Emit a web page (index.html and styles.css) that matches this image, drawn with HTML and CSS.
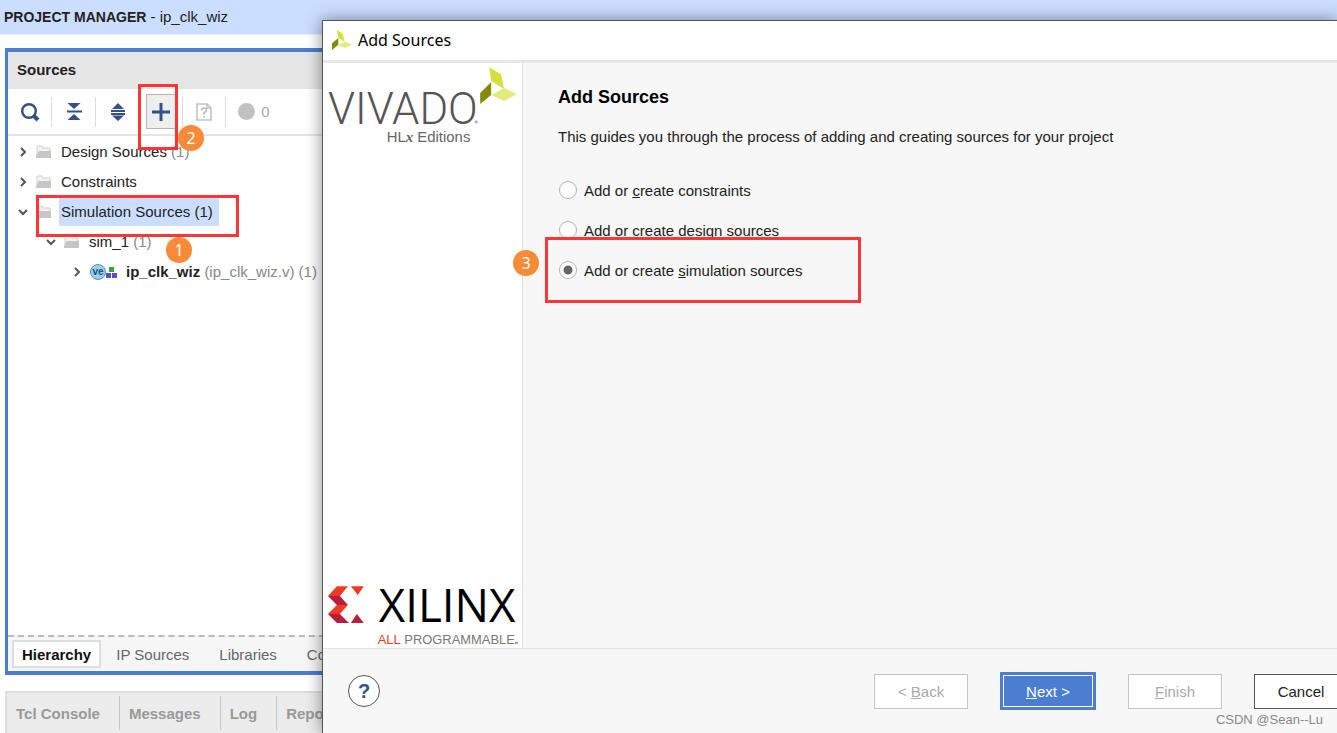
FILE: index.html
```html
<!DOCTYPE html>
<html lang="en">

<head>
    <meta charset="utf-8">
    <title>Add Sources</title>
    <meta name="viewport" content="width=device-width, initial-scale=1">
    <link rel="stylesheet" href="styles.css">
</head>

<body>
    <main class="app">
        <header class="topbar"><b>PROJECT MANAGER</b> - ip_clk_wiz</header>

        <section class="sources">
            <h2 class="sources-title">Sources</h2>
            <div class="toolbar">
                <button class="tool" aria-label="Search">
                    <svg width="20" height="20" viewBox="0 0 20 20"><circle cx="9" cy="9" r="6.800" fill="none" stroke="#33508a" stroke-width="2.400"/><path d="M14 14L18 18" stroke="#33508a" stroke-width="4"/></svg>
                </button>
                <button class="tool" aria-label="Collapse all">
                    <svg width="20" height="20" viewBox="0 0 20 20" fill="#33508a"><path d="M3.500 1H16.500L10 7ZM3.500 18H16.500L10 12ZM3 8.500H18V10.500H3Z"/></svg>
                </button>
                <button class="tool" aria-label="Expand all">
                    <svg width="20" height="20" viewBox="0 0 20 20" fill="#33508a"><path d="M10 1L16 7H4ZM3 8H17V10H3ZM3 11H17V13H3ZM4 13.500H16L10 19Z"/></svg>
                </button>
                <button class="tool tool-add" aria-label="Add sources">
                    <svg width="20" height="20" viewBox="0 0 20 20" fill="#33508a"><path d="M8.500 1H11.500V8.500H19V11.500H11.500V19H8.500V11.500H1V8.500H8.500Z"/></svg>
                    <span class="mark mark-add"></span>
                    <span class="badge badge-add">2</span>
                </button>
                <button class="tool" aria-label="Report">
                    <svg width="20" height="20" viewBox="0 0 20 20"><path d="M3 2H13L17 6V18H3ZM13 2V6H17" fill="none" stroke="#c4c4c4" stroke-width="1.600"/><path d="M7.500 8.500Q7.500 6 10 6Q12.500 6 12.500 8Q12.500 9.500 10 11V12.500M10 14V15.500" fill="none" stroke="#b8b8b8" stroke-width="1.600"/></svg>
                </button>
                <button class="tool tool-count"><span class="dot"></span>0</button>
            </div>

            <ul class="tree">
                <li class="node">
                    <svg class="arrow" viewBox="0 0 10 10"><path d="M3 1L7 5L3 9"/></svg>
                    <svg class="folder" viewBox="0 0 16 14"><path d="M1 10V1H6L7 3H14V6" fill="#f2f2f2" stroke="#cfcfcf"/><path d="M3 6H15V13H0V11Z" fill="#c6c6c6"/></svg>
                    <span class="label">Design Sources <i>(1)</i></span>
                </li>
                <li class="node">
                    <svg class="arrow" viewBox="0 0 10 10"><path d="M3 1L7 5L3 9"/></svg>
                    <svg class="folder" viewBox="0 0 16 14"><path d="M1 10V1H6L7 3H14V6" fill="#f2f2f2" stroke="#cfcfcf"/><path d="M3 6H15V13H0V11Z" fill="#c6c6c6"/></svg>
                    <span class="label">Constraints</span>
                </li>
                <li class="node">
                    <svg class="arrow" viewBox="0 0 10 10"><path d="M1 3L5 7L9 3"/></svg>
                    <svg class="folder" viewBox="0 0 16 14"><path d="M1 10V1H6L7 3H14V6" fill="#f2f2f2" stroke="#cfcfcf"/><path d="M3 6H15V13H0V11Z" fill="#c6c6c6"/></svg>
                    <span class="label selected">Simulation Sources (1)</span>
                    <span class="mark mark-sim"></span>
                    <span class="badge badge-sim">1</span>
                </li>
                <li class="node level-2">
                    <svg class="arrow" viewBox="0 0 10 10"><path d="M1 3L5 7L9 3"/></svg>
                    <svg class="folder" viewBox="0 0 16 14"><path d="M1 10V1H6L7 3H14V6" fill="#f2f2f2" stroke="#cfcfcf"/><path d="M3 6H15V13H0V11Z" fill="#c6c6c6"/></svg>
                    <span class="label">sim_1 <i>(1)</i></span>
                </li>
                <li class="node level-3">
                    <svg class="arrow" viewBox="0 0 10 10"><path d="M3 1L7 5L3 9"/></svg>
                    <svg class="module" viewBox="0 0 28 16"><circle cx="8" cy="8" r="7.500" fill="#9fd0ea" stroke="#4d93bd"/><text x="8" y="11" class="module-text">ve</text><path d="M19 3H24V8H19Z" fill="#35a535"/><path d="M16 9H21V14H16ZM22 9H27V14H22Z" fill="#5a4fc0"/></svg>
                    <span class="label"><b>ip_clk_wiz</b> <i>(ip_clk_wiz.v) (1)</i></span>
                </li>
            </ul>

            <nav class="view-tabs">
                <button class="view-tab active">Hierarchy</button>
                <button class="view-tab">IP Sources</button>
                <button class="view-tab">Libraries</button>
                <button class="view-tab">Compile Order</button>
            </nav>
        </section>

        <nav class="console-tabs">
            <button class="console-tab">Tcl Console</button>
            <button class="console-tab">Messages</button>
            <button class="console-tab">Log</button>
            <button class="console-tab">Reports</button>
        </nav>
    </main>

    <div class="dialog" role="dialog" aria-labelledby="dialog-title">
        <div class="titlebar">
            <svg width="20" height="20" viewBox="0 0 38 38"><path d="M9 0L20 6L24 22L12 15Z" fill="#d5e03a"/><path d="M0 25L12 15V28L0 38Z" fill="#858a0b"/><path d="M12 28L25 22L38 28L25 34Z" fill="#e3ea7e"/></svg>
            <span id="dialog-title">Add Sources</span>
        </div>
        <div class="dialog-body">
            <aside class="brand">
                <svg class="vivado" viewBox="0 0 200 84" role="img" aria-label="Vivado HLx Editions">
                    <text x="5" y="61" class="vivado-name">VIVADO</text>
                    <text x="64" y="79" class="vivado-sub">HL<tspan class="vivado-x">x</tspan> Editions</text>
                    <path d="M167 4L179 11L182 26L169 18Z" fill="#d5e03a"/>
                    <path d="M158 30L169 19V32L158 41Z" fill="#858a0b"/>
                    <path d="M169 32L182 25L195 31L182 38Z" fill="#e3ea7e"/>
                    <circle cx="154" cy="59" r="1.500" fill="#aaa"/>
                </svg>
                <svg class="xilinx" viewBox="0 0 200 68" role="img" aria-label="Xilinx All Programmable">
                    <path d="M14 6H25L17 16H5Z" fill="#ee3a24"/><path d="M28 6H41L35 15Z" fill="#ee3a24"/>
                    <path d="M5 16H17L25 25H14Z" fill="#b51f3c"/><path d="M14 25H25L17 34H5Z" fill="#ee3a24"/>
                    <path d="M5 34H17L26 43H14Z" fill="#b51f3c"/><path d="M34 34L41 43H28Z" fill="#b51f3c"/>
                    <text x="56" y="42" class="xilinx-name">XILINX</text>
                    <text x="55" y="64" class="xilinx-sub"><tspan fill="#ee3a24">ALL</tspan> PROGRAMMABLE</text>
                    <path d="M193 63H196" stroke="#999" stroke-width="2"/>
                </svg>
            </aside>
            <form class="content">
                <h1>Add Sources</h1>
                <p>This guides you through the process of adding and creating sources for your project</p>
                <div class="choice">
                    <input type="radio" name="kind" id="constraints">
                    <label for="constraints">Add or <u>c</u>reate constraints</label>
                </div>
                <div class="choice">
                    <input type="radio" name="kind" id="design">
                    <label for="design"><u>A</u>dd or create design sources</label>
                </div>
                <div class="choice">
                    <input type="radio" name="kind" id="simulation" checked>
                    <label for="simulation">Add or create <u>s</u>imulation sources</label>
                    <span class="mark mark-choice"></span>
                    <span class="badge badge-choice">3</span>
                </div>
            </form>
        </div>
        <footer class="actions">
            <button class="help" aria-label="Help">?</button>
            <button class="btn" disabled>&lt; <u>B</u>ack</button>
            <button class="btn btn-next"><u>N</u>ext &gt;</button>
            <button class="btn" disabled><u>F</u>inish</button>
            <button class="btn btn-cancel">Cancel</button>
        </footer>
        <span class="watermark">CSDN @Sean--Lu</span>
    </div>
</body>

</html>
```
FILE: styles.css
```css
* {
    box-sizing: border-box;
}

body {
    margin: 0;
    height: 100vh;
    overflow: hidden;
    position: relative;
    background: #fff;
    color: #222;
    font-family: "Liberation Sans", Arial, sans-serif;
    font-size: 15px;
}

button {
    font: inherit;
    color: inherit;
    margin: 0;
    padding: 0;
    border: 0;
    background: none;
}

i {
    font-style: normal;
    color: #888;
}

.app {
    display: flex;
    flex-direction: column;
    height: 100%;
}

.topbar {
    height: 35px;
    padding-left: 4px;
    line-height: 33px;
    background: #ccdeff;
    border-bottom: 1px solid #e3edff;
}

.topbar b {
    font-size: 14px;
}

/* sources panel */
.sources {
    display: flex;
    flex-direction: column;
    flex: 1;
    margin: 13px 5px 0;
    border: 4px solid #4b7dd1;
    border-left-width: 3px;
}

.sources-title {
    margin: 0;
    padding-left: 9px;
    font-size: 15px;
    line-height: 35px;
    height: 37px;
    background: #e6e6e6;
}

.toolbar {
    display: flex;
    align-items: center;
    height: 47px;
    border-bottom: 2px solid #e4e4e4;
}

.tool {
    display: flex;
    align-items: center;
    justify-content: center;
    position: relative;
    width: 44px;
    height: 30px;
    border-right: 1px solid #ddd;
}

.tool-add {
    width: 30px;
    height: 35px;
    margin: 0 6px;
    border: 1px solid #b5b5b5;
    background: #eee;
}

.tool-add + .tool {
    border-left: 1px solid #ddd;
}

.tool-count {
    gap: 6px;
    width: 56px;
    border: 0;
    color: #aaa;
}

.dot {
    width: 17px;
    height: 17px;
    border-radius: 50%;
    background: #c1c1c1;
}

.tree {
    flex: 1;
    margin: 0;
    padding: 1px 0 0 10px;
    list-style: none;
}

.node {
    display: flex;
    align-items: center;
    position: relative;
    height: 30px;
    white-space: nowrap;
}

.level-2 {
    padding-left: 28px;
}

.level-3 {
    padding-left: 54px;
}

.arrow {
    width: 10px;
    height: 10px;
    margin-right: 8px;
    fill: none;
    stroke: #555;
    stroke-width: 2;
}

.folder {
    width: 16px;
    height: 14px;
    margin-right: 7px;
}

.module {
    width: 28px;
    height: 16px;
    margin-right: 6px;
}

.module-text {
    font-size: 10px;
    font-weight: bold;
    text-anchor: middle;
    fill: #1e4f78;
}

.label {
    padding: 0 2px;
    line-height: 28px;
}

.selected {
    padding-right: 6px;
    background: #ccdeff;
}

.view-tabs {
    display: flex;
    align-items: center;
    height: 36px;
    padding-left: 4px;
    overflow: hidden;
    background: #f6f6f6;
    border-top: 2px dashed #bbb;
    color: #666;
}

.view-tab {
    height: 28px;
    margin-right: 12px;
    padding: 0 9px;
    white-space: nowrap;
}

.active {
    margin-right: 6px;
    padding: 0 8px;
    border: 2px solid #ddd;
    background: #fff;
    color: #111;
    font-weight: bold;
}

.console-tabs {
    display: flex;
    height: 42px;
    margin: 16px 5px 0;
    padding: 3px 0;
    border: 2px solid #ddd;
    border-bottom: 0;
    background: #ececec;
    color: #999;
    font-weight: bold;
}

.console-tab {
    padding: 0 19px 0 9px;
    border-right: 1px solid #c4c4c4;
}

/* wizard window */
.dialog {
    display: flex;
    flex-direction: column;
    position: absolute;
    top: 20px;
    left: 322px;
    right: 0;
    bottom: 0;
    border: 1px solid #555;
    border-width: 1px 0 0 1px;
    background: #f7f7f7;
    box-shadow: 0 0 16px rgba(0, 0, 0, .45);
}

.titlebar {
    display: flex;
    align-items: center;
    gap: 6px;
    height: 42px;
    padding: 0 9px 2px;
    border-bottom: 3px solid #e8e8e8;
    background: #fff;
    color: #000;
    font-family: "Noto Sans", sans-serif;
    font-size: 16px;
}

.dialog-body {
    display: flex;
    flex: 1;
    border-bottom: 1px solid #e2e2e2;
}

.brand {
    display: flex;
    flex-direction: column;
    justify-content: space-between;
    width: 200px;
    border-right: 1px solid #e2e2e2;
    background: #fff;
}

.vivado {
    height: 84px;
}

.xilinx {
    height: 68px;
}

.vivado-name {
    font-family: Roboto, sans-serif;
    font-size: 44px;
    font-weight: 300;
    fill: #555;
}

.vivado-sub {
    font-size: 15px;
    fill: #666;
}

.vivado-x {
    font-family: "Liberation Serif", serif;
    font-style: italic;
    font-weight: bold;
}

.xilinx-name {
    font-family: "Open Sans", sans-serif;
    font-size: 46px;
    font-weight: 500;
    fill: #000;
}

.xilinx-sub {
    font-size: 13px;
    fill: #777;
}

.content {
    flex: 1;
    padding: 24px 35px;
}

.content h1 {
    margin: 0 0 20px;
    color: #000;
    font-size: 18px;
    line-height: 20px;
}

.content p {
    margin: 0 0 33px;
    line-height: 20px;
}

.choice {
    display: flex;
    align-items: center;
    position: relative;
    height: 20px;
    margin-bottom: 20px;
}

.choice input {
    appearance: none;
    width: 18px;
    height: 18px;
    margin: 0 7px 0 1px;
    border: 1px solid #b4b4b4;
    border-radius: 50%;
    background: #fff;
}

.choice input:checked {
    background: radial-gradient(circle, #666 4px, #fff 5px);
}

.actions {
    display: flex;
    align-items: center;
    height: 84px;
    padding-left: 25px;
    overflow: hidden;
}

.help {
    width: 32px;
    height: 32px;
    margin-right: auto;
    border: 1px solid #555;
    border-radius: 50%;
    background: #fff;
    color: #33508a;
    font-size: 20px;
    font-weight: bold;
}

.btn {
    flex-shrink: 0;
    width: 94px;
    height: 35px;
    margin-left: 32px;
    border: 1px solid #c4c4c4;
    background: #fff;
}

.btn:disabled {
    color: #aaa;
}

.btn-next {
    width: 96px;
    height: 38px;
    border: 2px solid #4b7dd1;
    outline: 1px solid #fff;
    outline-offset: -4px;
    background: #4b7dd1;
    color: #fff;
}

.btn-cancel {
    margin-right: -11px;
    border-color: #555;
}

.watermark {
    position: absolute;
    right: 14px;
    bottom: 6px;
    color: #888;
    font-size: 13px;
}

/* step highlights */
.mark {
    position: absolute;
    z-index: 1;
    border: 3px solid #fc3636;
}

.mark-add {
    top: -11px;
    left: -9px;
    width: 40px;
    height: 66px;
}

.mark-sim {
    top: -2px;
    left: 18px;
    width: 203px;
    height: 42px;
}

.mark-choice {
    top: -23px;
    left: -13px;
    width: 316px;
    height: 66px;
}

.badge {
    position: absolute;
    z-index: 1;
    width: 26px;
    height: 26px;
    border-radius: 50%;
    background: #f88a38;
    color: #fff;
    font-family: "Noto Sans", sans-serif;
    font-size: 16px;
    line-height: 26px;
    text-align: center;
}

.badge-add {
    top: 30px;
    left: 31px;
}

.badge-sim {
    top: 40px;
    left: 148px;
}

.badge-choice {
    top: -10px;
    left: -45px;
}
```
